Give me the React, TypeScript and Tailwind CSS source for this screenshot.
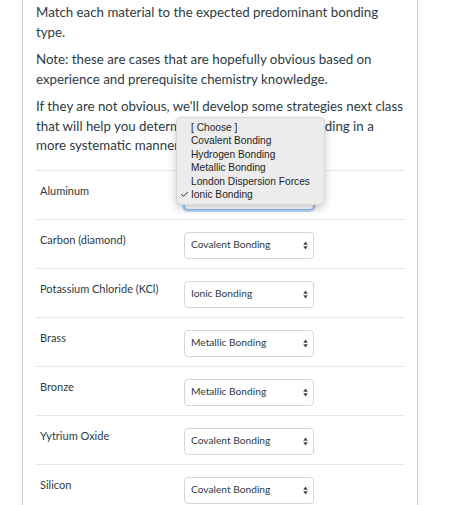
import { Check } from 'lucide-react'

const rows = [
  { label: 'Aluminum', value: 'Ionic Bonding', open: true },
  { label: 'Carbon (diamond)', value: 'Covalent Bonding' },
  { label: 'Potassium Chloride (KCl)', value: 'Ionic Bonding' },
  { label: 'Brass', value: 'Metallic Bonding' },
  { label: 'Bronze', value: 'Metallic Bonding' },
  { label: 'Yytrium Oxide', value: 'Covalent Bonding' },
  { label: 'Silicon', value: 'Covalent Bonding' },
]

const options = [
  '[ Choose ]',
  'Covalent Bonding',
  'Hydrogen Bonding',
  'Metallic Bonding',
  'London Dispersion Forces',
  'Ionic Bonding',
]

function Arrows() {
  return (
    <svg width="5" height="9" viewBox="0 0 5 9" className="text-[#444]">
      <path d="M2.5 0.5 L4.8 3.8 H0.2 Z" fill="currentColor" />
      <path d="M2.5 8.5 L4.8 5.2 H0.2 Z" fill="currentColor" />
    </svg>
  )
}

function Select({ value, focused }: { value: string; focused?: boolean }) {
  return (
    <div
      className={
        'w-[130px] h-[27px] rounded-[4px] bg-white flex items-center justify-between pl-[6px] pr-[5px] text-[10.2px] text-[#2d3b45] ' +
        (focused ? 'border border-[#8fb8f0] shadow-[0_0_0_2px_#b9d4f7]' : 'border border-[#d3d7da]')
      }
    >
      <span>{value}</span>
      <Arrows />
    </div>
  )
}

export default function App() {
  return (
    <div className="relative w-[474px] h-[505px] overflow-hidden bg-white font-['Lato','Noto_Sans',sans-serif] text-[#2d3b45]">
      <div className="ml-[22px] w-[396px] min-h-[505px] border-x border-[#c7cdd1] pl-[13px] pr-[12px] pt-[3px]">
        <div className="text-[13.3px] leading-[19.5px] space-y-[8px]">
          <p>Match each material to the expected predominant bonding type.</p>
          <p>Note: these are cases that are hopefully obvious based on experience and prerequisite chemistry knowledge.</p>
          <p>
            If they are not obvious, we'll develop some strategies next class that will help you determine the predominant bonding in a
            more systematic manner.
          </p>
        </div>

        <div className="mt-[14px]">
          {rows.map((row) => (
            <div key={row.label} className="h-[49px] border-t border-[#e6e8ea] flex pt-[12px]">
              <div className="w-[148px] pl-[4px] pt-[1px] text-[11px] leading-[13px]">{row.label}</div>
              <Select value={row.value} focused={row.open} />
            </div>
          ))}
        </div>
      </div>

      {/* open dropdown for the first row */}
      <div className="absolute left-[176px] top-[117px] w-[149px] rounded-[5px] bg-[#ececec] border border-[#d9d9d9] shadow-[0_3px_8px_rgba(0,0,0,0.22)] pt-[3px] pb-[3px] font-['Liberation_Sans',Arial,sans-serif] text-[10.2px] leading-[13.4px] text-[#1e1e1e]">
        {options.map((opt) => (
          <div key={opt} className="relative pl-[14px] whitespace-nowrap">
            {opt === 'Ionic Bonding' && (
              <Check size={9} strokeWidth={2.5} className="absolute left-[3px] top-[2px]" />
            )}
            {opt}
          </div>
        ))}
      </div>
    </div>
  )
}
